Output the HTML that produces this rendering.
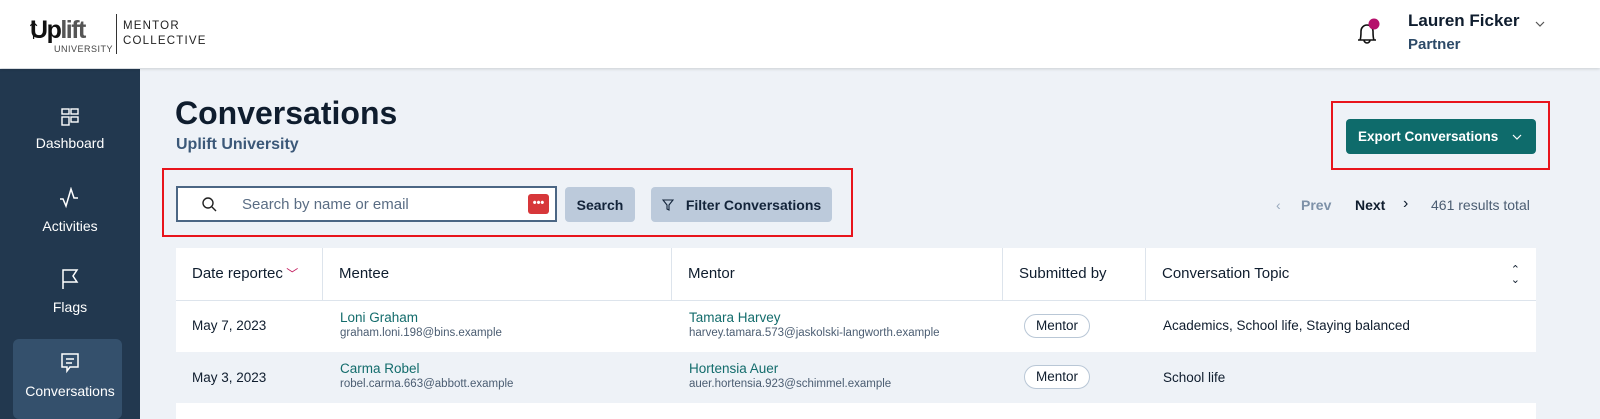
<!DOCTYPE html>
<html><head><meta charset="utf-8"><style>
*{box-sizing:border-box;margin:0;padding:0}
body{width:1600px;height:419px;overflow:hidden;background:#eef2f7;font-family:"Liberation Sans",sans-serif;position:relative;color:#0f1d2e}
.abs{position:absolute}
.hdr{left:0;top:0;width:1600px;height:68px;background:#fff;box-shadow:0 1px 3px rgba(0,0,0,.15);z-index:2}
.side{left:0;top:69px;width:140px;height:350px;background:#22384f}
.nav{position:absolute;left:0;width:140px;text-align:center;color:#fff;font-size:14px}
.nav svg{display:block;margin:0 auto}
.btn{border-radius:4px;font-size:14px;font-weight:bold;display:flex;align-items:center;justify-content:center}
.tbl{left:176px;top:248px;width:1360px;height:171px;background:#fff}
.th{position:absolute;top:0;height:52px;line-height:52px;font-size:15px;color:#0f1d2e;padding-left:16px;border-right:1px solid #dde4ec}
.td{position:absolute;font-size:13.5px}
.nm{color:#136c6c;font-size:13.5px}
.em{color:#4b5d72;font-size:11.5px;margin-top:2px}
.pill{position:absolute;width:66px;height:24px;border:1.5px solid #b9c7d6;border-radius:12px;font-size:13.5px;text-align:center;line-height:21px;background:#fff}
</style></head><body>
<div class="abs hdr">
  <div class="abs" style="left:26px;top:12px;font-size:26px;font-weight:bold;letter-spacing:-1px;color:#111">
    <span style="font-size:30px">↑</span></div>
  <div class="abs" style="left:30px;top:16px;font-size:25px;font-weight:bold;letter-spacing:-1.5px;color:#111">U<span style="color:#111">p</span><span style="color:#555">lift</span></div>
  <div class="abs" style="left:54px;top:44px;font-size:9px;color:#444;letter-spacing:.5px">UNIVERSITY</div>
  <div class="abs" style="left:116px;top:14px;width:1px;height:40px;background:#333"></div>
  <div class="abs" style="left:123px;top:19px;font-size:11.5px;letter-spacing:1.2px;line-height:15px;color:#222">MENTOR<br>COLLECTIVE</div>
  <svg class="abs" style="left:1350px;top:16px" width="32" height="32" viewBox="0 0 32 32"><path d="M8 24h18M10 24c1-2 1-4 1-9a6 6 0 0 1 12 0c0 5 0 7 1 9M14 24a3 3 0 0 0 6 0" fill="none" stroke="#111" stroke-width="1.6"/><circle cx="24" cy="8" r="5.5" fill="#b5106b"/></svg>
  <div class="abs" style="left:1408px;top:11px;font-size:17px;font-weight:bold;color:#0f1d2e">Lauren Ficker</div>
  <div class="abs" style="left:1408px;top:36px;font-size:15px;font-weight:bold;color:#2d4a68">Partner</div>
  <svg class="abs" style="left:1534px;top:20px" width="12" height="8" viewBox="0 0 12 8"><path d="M2 2l4 4 4-4" fill="none" stroke="#555" stroke-width="1.2"/></svg>
</div>
<div class="abs side">
  <div class="nav" style="top:38px"><svg width="20" height="20" viewBox="0 0 20 20" fill="none" stroke="#fff" stroke-width="1.4"><rect x="2" y="2" width="7" height="5"/><rect x="11" y="2" width="7" height="5"/><rect x="2" y="10" width="7" height="8"/><rect x="11" y="10" width="7" height="5"/></svg><div style="margin-top:8px">Dashboard</div></div>
  <div class="nav" style="top:118px"><svg width="22" height="22" viewBox="0 0 22 22" fill="none" stroke="#fff" stroke-width="1.5"><path d="M1 12h3l3 7 5-17 3 9h4"/></svg><div style="margin-top:9px">Activities</div></div>
  <div class="nav" style="top:199px"><svg width="20" height="22" viewBox="0 0 20 22" fill="none" stroke="#fff" stroke-width="1.5"><path d="M3 21V2h14l-4 6 4 6H3"/></svg><div style="margin-top:9px">Flags</div></div>
  <div class="abs" style="left:13px;top:270px;width:109px;height:80px;background:#34506c;border-radius:6px"></div>
  <div class="nav" style="top:283px"><svg width="22" height="22" viewBox="0 0 22 22" fill="none" stroke="#fff" stroke-width="1.5"><path d="M3 2h16v13h-8l-3 4v-4H3z M7 7h8M7 11h6"/></svg><div style="margin-top:9px">Conversations</div></div>
</div>
<div class="abs" style="left:175px;top:95px;font-size:32px;font-weight:bold;color:#0f1d2e">Conversations</div>
<div class="abs" style="left:176px;top:136px;font-size:16px;font-weight:bold;color:#3b5878">Uplift University</div>
<div class="abs" style="left:1331px;top:101px;width:219px;height:69px;border:2px solid #e8141c"></div>
<div class="abs btn" style="left:1346px;top:119px;width:190px;height:35px;background:#0e6b6b;color:#fff;justify-content:space-between;padding:0 14px 0 12px;font-size:13.5px;white-space:nowrap">Export Conversations<svg width="10" height="6" viewBox="0 0 10 6"><path d="M1 1l4 4 4-4" fill="none" stroke="#fff" stroke-width="1.2"/></svg></div>
<div class="abs" style="left:162px;top:168px;width:691px;height:69px;border:2px solid #e8141c"></div>
<div class="abs" style="left:176px;top:186px;width:381px;height:36px;background:#fff;border:2px solid #4b6684"></div>
<svg class="abs" style="left:201px;top:196px" width="16" height="16" viewBox="0 0 16 16" fill="none" stroke="#222" stroke-width="1.4"><circle cx="7" cy="7" r="5"/><path d="M11 11l4 4"/></svg>
<div class="abs" style="left:242px;top:196px;font-size:15px;color:#5a6d84">Search by name or email</div>
<div class="abs" style="left:528px;top:194px;width:21px;height:20px;background:#d7373a;border-radius:3px;color:#fff;font-size:11px;text-align:center;line-height:18px;font-weight:bold">•••</div>
<div class="abs btn" style="left:565px;top:187px;width:70px;height:35px;background:#bccadb;color:#13243a">Search</div>
<div class="abs btn" style="left:651px;top:187px;width:181px;height:35px;background:#bccadb;color:#13243a"><svg style="margin-right:12px" width="12" height="12" viewBox="0 0 12 12" fill="none" stroke="#13243a" stroke-width="1.1"><path d="M1 1h10L7 6v5L5 10V6z"/></svg>Filter Conversations</div>
<div class="abs" style="left:1276px;top:197px;font-size:14px;color:#98a9bd">‹</div>
<div class="abs" style="left:1301px;top:197px;font-size:14px;color:#7d91a8;font-weight:bold">Prev</div>
<div class="abs" style="left:1355px;top:197px;font-size:14px;color:#0f1d2e;font-weight:bold">Next</div>
<div class="abs" style="left:1403px;top:195px;font-size:16px;color:#0f1d2e">›</div>
<div class="abs" style="left:1431px;top:197px;font-size:14px;color:#4b5d72">461 results total</div>
<div class="abs tbl">
  <div class="th" style="left:0;width:147px">Date reportec<span style="color:#c2185b;font-size:12px"> ﹀</span></div>
  <div class="th" style="left:147px;width:349px">Mentee</div>
  <div class="th" style="left:496px;width:331px">Mentor</div>
  <div class="th" style="left:827px;width:143px">Submitted by</div>
  <div class="th" style="left:970px;width:390px;border:none">Conversation Topic<span style="position:absolute;right:16px;top:0;font-size:11px;line-height:10px;padding-top:17px">⌃<br>⌄</span></div>
  <div class="abs" style="left:0;top:52px;width:1360px;height:1px;background:#dde4ec"></div>
  <div class="abs" style="left:0;top:104px;width:1360px;height:51px;background:#eef2f7"></div>
  <div class="td" style="left:16px;top:70px">May 7, 2023</div>
  <div class="td" style="left:164px;top:62px"><div class="nm">Loni Graham</div><div class="em">graham.loni.198@bins.example</div></div>
  <div class="td" style="left:513px;top:62px"><div class="nm">Tamara Harvey</div><div class="em">harvey.tamara.573@jaskolski-langworth.example</div></div>
  <div class="pill" style="left:848px;top:66px">Mentor</div>
  <div class="td" style="left:987px;top:70px">Academics, School life, Staying balanced</div>
  <div class="td" style="left:16px;top:122px">May 3, 2023</div>
  <div class="td" style="left:164px;top:113px"><div class="nm">Carma Robel</div><div class="em">robel.carma.663@abbott.example</div></div>
  <div class="td" style="left:513px;top:113px"><div class="nm">Hortensia Auer</div><div class="em">auer.hortensia.923@schimmel.example</div></div>
  <div class="pill" style="left:848px;top:117px">Mentor</div>
  <div class="td" style="left:987px;top:122px">School life</div>
</div>
</body></html>
